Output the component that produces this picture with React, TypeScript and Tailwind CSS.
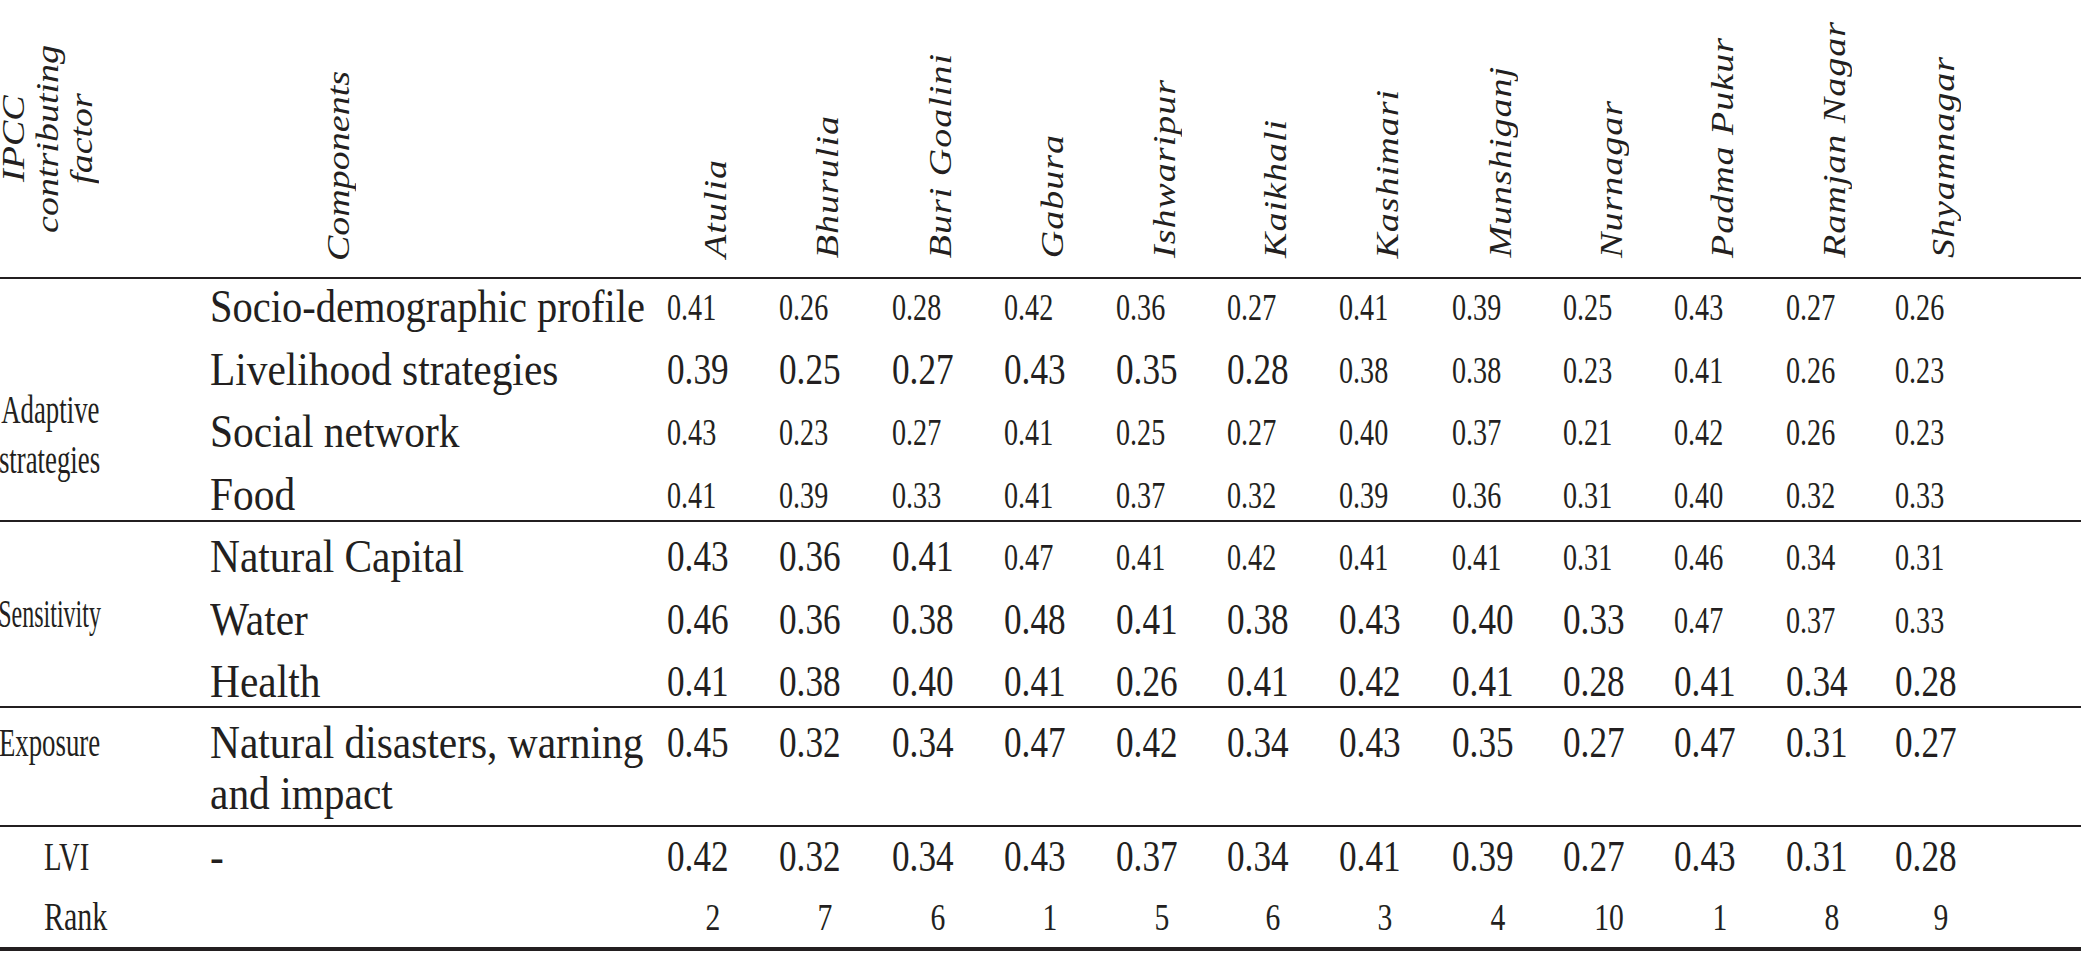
import React from "react";

const W = [
  "w-[112px]", "w-[113px]", "w-[112px]", "w-[112px]", "w-[111px]", "w-[112px]",
  "w-[113px]", "w-[111px]", "w-[111px]", "w-[112px]", "w-[109px]", "w-[191px]",
];

const PLACES = [
  "Atulia", "Bhurulia", "Buri Goalini", "Gabura", "Ishwaripur", "Kaikhali",
  "Kashimari", "Munshiganj", "Nurnagar", "Padma Pukur", "Ramjan Nagar", "Shyamnagar",
];

type Cell = [string, boolean]; // value, large

const mk = (vals: string, large: (i: number) => boolean): Cell[] =>
  vals.split(" ").map((v, i) => [v, large(i)]);

const R1 = mk("0.41 0.26 0.28 0.42 0.36 0.27 0.41 0.39 0.25 0.43 0.27 0.26", () => false);
const R2 = mk("0.39 0.25 0.27 0.43 0.35 0.28 0.38 0.38 0.23 0.41 0.26 0.23", (i) => i < 6);
const R3 = mk("0.43 0.23 0.27 0.41 0.25 0.27 0.40 0.37 0.21 0.42 0.26 0.23", () => false);
const R4 = mk("0.41 0.39 0.33 0.41 0.37 0.32 0.39 0.36 0.31 0.40 0.32 0.33", () => false);
const R5 = mk("0.43 0.36 0.41 0.47 0.41 0.42 0.41 0.41 0.31 0.46 0.34 0.31", (i) => i < 3);
const R6 = mk("0.46 0.36 0.38 0.48 0.41 0.38 0.43 0.40 0.33 0.47 0.37 0.33", (i) => i < 9);
const R7 = mk("0.41 0.38 0.40 0.41 0.26 0.41 0.42 0.41 0.28 0.41 0.34 0.28", () => true);
const R8 = mk("0.45 0.32 0.34 0.47 0.42 0.34 0.43 0.35 0.27 0.47 0.31 0.27", () => true);
const LVI = mk("0.42 0.32 0.34 0.43 0.37 0.34 0.41 0.39 0.27 0.43 0.31 0.28", () => true);
const RANK = "2 7 6 1 5 6 3 4 10 1 8 9".split(" ");

function Line({ thick }: { thick?: boolean }) {
  return <div className={thick ? "h-[4px] w-[2081px] bg-[#231f20]" : "h-[2px] w-[2081px] bg-[#231f20]"} />;
}

function Nums({ cells }: { cells: Cell[] }) {
  return (
    <>
      {cells.map(([v, big], i) => (
        <div key={i} className={`${W[i]} flex items-center pl-[5px]`}>
          <span
            className={
              big
                ? "inline-block origin-left [transform:scaleX(0.8)] text-[44px] leading-none"
                : "inline-block origin-left [transform:scaleX(0.74)] text-[38px] leading-none"
            }
          >
            {v}
          </span>
        </div>
      ))}
    </>
  );
}

function Row({ label, cells, narrow }: { label: string; cells: Cell[]; narrow?: boolean }) {
  return (
    <div className="flex h-[44px]">
      <div className="w-[460px] flex items-center pl-[8px] whitespace-nowrap">
        <span
          className={
            narrow
              ? "inline-block origin-left [transform:scaleX(0.88)] text-[46px] leading-none"
              : "inline-block origin-left [transform:scaleX(0.9)] text-[46px] leading-none"
          }
        >
          {label}
        </span>
      </div>
      <Nums cells={cells} />
    </div>
  );
}

function Factor({ lines, pt, narrow }: { lines: string[]; pt: string; narrow?: boolean }) {
  return (
    <div className={`w-[202px] shrink-0 ${pt}`}>
      {lines.map((l) => (
        <div key={l} className="w-[100px] h-[50px] flex items-center justify-center">
          <span
            className={
              narrow
                ? "shrink-0 whitespace-nowrap [transform:scaleX(0.6)] text-[40px] leading-none"
                : "shrink-0 whitespace-nowrap [transform:scaleX(0.67)] text-[40px] leading-none"
            }
          >
            {l}
          </span>
        </div>
      ))}
    </div>
  );
}

export default function App() {
  return (
    <div
      className="w-[2096px] h-[962px] overflow-hidden bg-white text-[#231f20]"
      style={{ fontFamily: '"Liberation Serif", "Times New Roman", serif' }}
    >
      {/* Header */}
      <div className="flex h-[277px]">
        <div className="w-[202px] flex items-center">
          <div className="-ml-[13px] [writing-mode:vertical-rl] rotate-180 [transform:scaleX(0.85)] italic text-[38px] leading-[40px] text-center">
            <div>IPCC</div>
            <div>contributing</div>
            <div>factor</div>
          </div>
        </div>
        <div className="w-[460px] flex items-end pb-[16px]">
          <div className="ml-[117px] [writing-mode:vertical-rl] rotate-180 [transform:scaleX(0.85)] italic text-[38px] leading-[38px] whitespace-nowrap">
            Components
          </div>
        </div>
        {PLACES.map((p, i) => (
          <div key={p} className={`${W[i]} flex items-end pb-[19px]`}>
            <div className="ml-[34px] [writing-mode:vertical-rl] rotate-180 [transform:scaleX(0.85)] italic text-[38px] leading-[38px] tracking-[1px] whitespace-nowrap">
              {p}
            </div>
          </div>
        ))}
      </div>
      <Line />

      {/* Adaptive strategies */}
      <div className="flex h-[241px]">
        <Factor lines={["Adaptive", "strategies"]} pt="pt-[106px]" />
        <div className="flex flex-col justify-between pt-[6px] pb-[3px]">
          <Row label="Socio-demographic profile" cells={R1} narrow />
          <Row label="Livelihood strategies" cells={R2} />
          <Row label="Social network" cells={R3} />
          <Row label="Food" cells={R4} />
        </div>
      </div>
      <Line />

      {/* Sensitivity */}
      <div className="flex h-[184px]">
        <Factor lines={["Sensitivity"]} pt="pt-[67px]" narrow />
        <div className="flex flex-col justify-between pt-[13px] pb-[2px]">
          <Row label="Natural Capital" cells={R5} />
          <Row label="Water" cells={R6} />
          <Row label="Health" cells={R7} />
        </div>
      </div>
      <Line />

      {/* Exposure */}
      <div className="flex h-[117px] pt-[10px]">
        <Factor lines={["Exposure"]} pt="pt-0" />
        <div className="w-[460px] pl-[8px] whitespace-nowrap">
          <div className="origin-left [transform:scaleX(0.9)] text-[46px]">
            <div className="h-[50px] leading-[50px]">Natural disasters, warning</div>
            <div className="leading-[52px]">and impact</div>
          </div>
        </div>
        <div className="flex h-[50px]">
          <Nums cells={R8} />
        </div>
      </div>
      <Line />

      {/* LVI / Rank */}
      <div className="flex h-[120px] pt-[8px] pb-[8px]">
        <div className="w-[202px] flex flex-col justify-between text-[40px] leading-none">
          <div className="h-[44px] flex items-center pl-[44px]">
            <span className="inline-block origin-left [transform:scaleX(0.72)]">LVI</span>
          </div>
          <div className="h-[44px] flex items-center pl-[44px]">
            <span className="inline-block origin-left [transform:scaleX(0.75)]">Rank</span>
          </div>
        </div>
        <div className="flex flex-col justify-between">
          <Row label="-" cells={LVI} />
          <div className="flex h-[44px]">
            <div className="w-[460px]" />
            {RANK.map((r, i) => (
              <div key={i} className={`${W[i]} flex items-center pl-[5px]`}>
                <span className="ml-[16px] inline-block w-[60px] text-center [transform:scaleX(0.78)] text-[38px] leading-none">
                  {r}
                </span>
              </div>
            ))}
          </div>
        </div>
      </div>
      <Line thick />
    </div>
  );
}
